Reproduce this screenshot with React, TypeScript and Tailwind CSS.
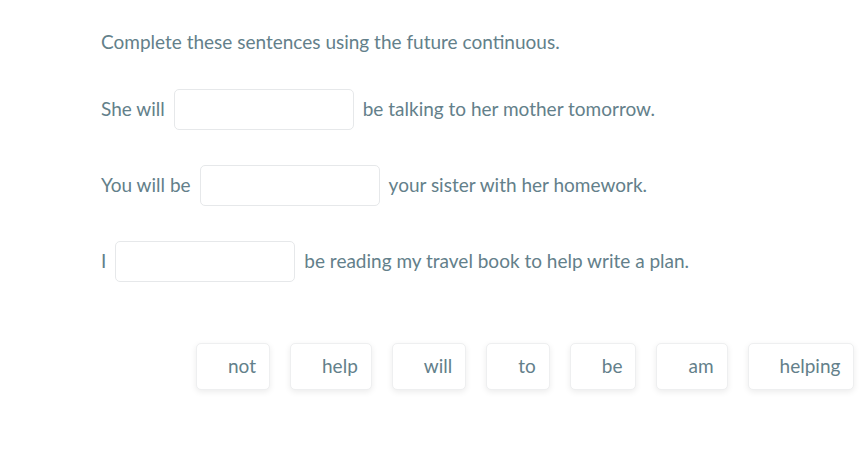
import React from 'react';

const sentences = [
  { before: 'She will', after: 'be talking to her mother tomorrow.' },
  { before: 'You will be', after: 'your sister with her homework.' },
  { before: 'I', after: 'be reading my travel book to help write a plan.' },
];

const words = ['not', 'help', 'will', 'to', 'be', 'am', 'helping'];

const App: React.FC = () => {
  return (
    <div
      className="min-h-screen bg-white text-[19px] text-[#63808a]"
      style={{ fontFamily: 'Lato, "Open Sans", sans-serif' }}
    >
      <div className="pl-[101px] pt-[28px]">
        <p className="leading-[28px]">Complete these sentences using the future continuous.</p>

        {/* Sentences */}
        <div className="mt-[33px] flex flex-col gap-[35px]">
          {sentences.map((s) => (
            <div key={s.before} className="flex items-center gap-[9px] h-[41px]">
              <span>{s.before}</span>
              <div className="w-[180px] h-[41px] rounded-[5px] border border-[#e6e8ea] bg-white" />
              <span>{s.after}</span>
            </div>
          ))}
        </div>
      </div>

      {/* Word bank */}
      <div className="mt-[61px] flex gap-[20px] pl-[196px]">
        {words.map((w) => (
          <div
            key={w}
            className="h-[47px] flex items-center pl-[31px] pr-[13px] rounded-[5px] border border-[#eeeff0] bg-white shadow-[0_2px_6px_rgba(0,0,0,0.08)]"
          >
            {w}
          </div>
        ))}
      </div>
    </div>
  );
};

export default App;
